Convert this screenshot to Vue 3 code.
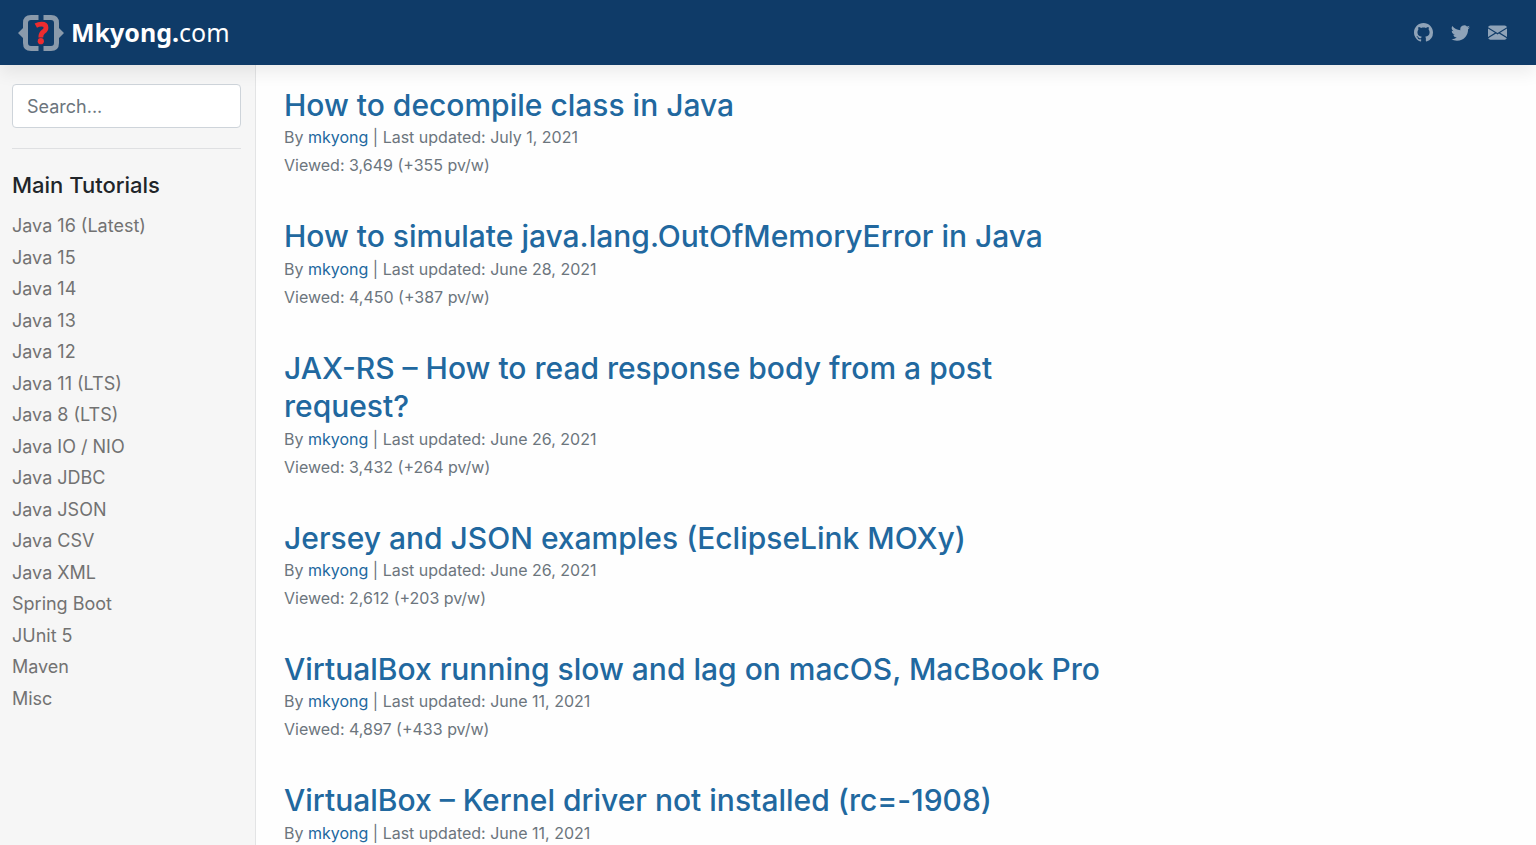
<script setup>
const tutorials = [
  'Java 16 (Latest)', 'Java 15', 'Java 14', 'Java 13', 'Java 12', 'Java 11 (LTS)',
  'Java 8 (LTS)', 'Java IO / NIO', 'Java JDBC', 'Java JSON', 'Java CSV', 'Java XML',
  'Spring Boot', 'JUnit 5', 'Maven', 'Misc',
]

const posts = [
  { title: 'How to decompile class in Java', date: 'July 1, 2021', views: '3,649 (+355 pv/w)' },
  { title: 'How to simulate java.lang.OutOfMemoryError in Java', date: 'June 28, 2021', views: '4,450 (+387 pv/w)' },
  { title: 'JAX-RS – How to read response body from a post request?', date: 'June 26, 2021', views: '3,432 (+264 pv/w)' },
  { title: 'Jersey and JSON examples (EclipseLink MOXy)', date: 'June 26, 2021', views: '2,612 (+203 pv/w)' },
  { title: 'VirtualBox running slow and lag on macOS, MacBook Pro', date: 'June 11, 2021', views: '4,897 (+433 pv/w)' },
  { title: 'VirtualBox – Kernel driver not installed (rc=-1908)', date: 'June 11, 2021' },
]
</script>

<template>
  <div class="page">
    <header class="topbar">
      <a class="brand" href="#" aria-label="Mkyong.com">
        <svg class="mark" viewBox="0 0 46 36" aria-hidden="true">
          <g fill="none" stroke="#8a9aab" stroke-width="5">
            <path d="M20.500 2.500H13Q7.500 2.500 7.500 8V28Q7.500 33.500 13 33.500H20.500" />
            <path d="M25.500 2.500H33Q38.500 2.500 38.500 8V28Q38.500 33.500 33 33.500H25.500" />
          </g>
          <path fill="#8a9aab" d="M6 12L0 18L6 24ZM40 12L46 18L40 24Z" />
          <path fill="none" stroke="#ee2c2f" stroke-width="4.800" d="M17.800 10.700Q20.500 9.200 23.500 9.200Q28 9.200 28 12.700Q28 15 25.300 16.800Q22.800 18.600 22.800 22.500" />
          <circle cx="22.800" cy="26.200" r="3.100" fill="#ee2c2f" />
        </svg>
        <span class="brand-name"><b>Mkyong.</b>com</span>
      </a>
      <nav class="social" aria-label="Social">
        <a href="#" aria-label="GitHub">
          <svg viewBox="0 0 16 16"><path d="M8 0C3.580 0 0 3.580 0 8c0 3.540 2.290 6.530 5.470 7.590.4.070.55-.17.55-.38 0-.19-.01-.82-.01-1.490-2.010.37-2.530-.49-2.690-.94-.09-.23-.48-.94-.82-1.130-.28-.15-.68-.52-.01-.53.63-.01 1.080.58 1.230.82.72 1.210 1.870.87 2.330.66.07-.52.28-.87.51-1.070-1.780-.2-3.640-.89-3.640-3.950 0-.87.31-1.590.82-2.150-.08-.2-.36-1.020.08-2.120 0 0 .67-.21 2.200.82.64-.18 1.320-.27 2-.27s1.360.09 2 .27c1.530-1.040 2.200-.82 2.200-.82.44 1.100.16 1.920.08 2.120.51.56.82 1.270.82 2.150 0 3.070-1.870 3.750-3.650 3.950.29.25.54.73.54 1.480 0 1.070-.01 1.930-.01 2.200 0 .21.15.46.55.38A8.010 8.010 0 0 0 16 8c0-4.420-3.580-8-8-8z" /></svg>
        </a>
        <a href="#" aria-label="Twitter">
          <svg viewBox="0 0 16 16"><path d="M5.026 15c6.038 0 9.341-5.003 9.341-9.334 0-.14 0-.282-.006-.422A6.685 6.685 0 0 0 16 3.542a6.658 6.658 0 0 1-1.889.518 3.301 3.301 0 0 0 1.447-1.817 6.533 6.533 0 0 1-2.087.793A3.286 3.286 0 0 0 7.875 6.030a9.325 9.325 0 0 1-6.767-3.429 3.289 3.289 0 0 0 1.018 4.382A3.323 3.323 0 0 1 .64 6.575v.045a3.288 3.288 0 0 0 2.632 3.218 3.203 3.203 0 0 1-.865.115 3.230 3.230 0 0 1-.614-.057 3.283 3.283 0 0 0 3.067 2.277A6.588 6.588 0 0 1 .78 13.580a6.320 6.320 0 0 1-.78-.045A9.344 9.344 0 0 0 5.026 15z" /></svg>
        </a>
        <a href="#" aria-label="Email">
          <svg viewBox="0 0 16 16"><path d="M.05 3.555A2 2 0 0 1 2 2h12a2 2 0 0 1 1.950 1.555L8 8.414.05 3.555zM0 4.697v7.104l5.803-3.558L0 4.697zM6.761 8.830l-6.570 4.027A2 2 0 0 0 2 14h12a2 2 0 0 0 1.808-1.144l-6.570-4.027L8 9.586l-1.239-.757zm3.436-.586L16 11.801V4.697l-5.803 3.546z" /></svg>
        </a>
      </nav>
    </header>

    <div class="columns">
      <aside class="sidebar">
        <form class="search" @submit.prevent>
          <input type="search" placeholder="Search..." aria-label="Search" />
        </form>
        <h2>Main Tutorials</h2>
        <ul>
          <li v-for="name in tutorials" :key="name"><a href="#">{{ name }}</a></li>
        </ul>
      </aside>

      <main class="posts">
        <article v-for="post in posts" :key="post.title">
          <h2><a href="#">{{ post.title }}</a></h2>
          <p>By <a href="#">mkyong</a> | Last updated: {{ post.date }}</p>
          <p v-if="post.views">Viewed: {{ post.views }}</p>
        </article>
      </main>
    </div>
  </div>
</template>

<style>
body {
  margin: 0;
  background: #fefefe;
}
</style>

<style scoped>
.page {
  display: flex;
  flex-direction: column;
  min-height: 100vh;
  font-family: Inter, "Liberation Sans", sans-serif;
  color: #6c757d;
}
a {
  color: #21689f;
  text-decoration: none;
}
.topbar {
  position: relative;
  display: flex;
  align-items: center;
  justify-content: space-between;
  height: 65px;
  padding: 0 29px 0 18px;
  box-sizing: border-box;
  background: #0f3b68;
  box-shadow: 0 8px 16px rgba(0, 0, 0, 0.07);
}
.brand {
  display: flex;
  align-items: center;
  gap: 7px;
  color: #fff;
}
.mark {
  width: 46px;
  height: 36px;
}
.brand-name {
  padding-bottom: 2px;
  font-family: "Noto Sans", "Open Sans", sans-serif;
  font-size: 25px;
  line-height: 36px;
}
.social {
  display: flex;
  gap: 18px;
}
.social a {
  display: flex;
}
.social svg {
  width: 19px;
  height: 19px;
  fill: #8fa3b8;
}
.columns {
  flex: 1;
  display: grid;
  grid-template-columns: 1fr 5fr;
}
.sidebar {
  padding: 19px 14px 24px 12px;
  border-right: 1px solid #e3e4e5;
  background: #f6f6f6;
}
.search {
  padding-bottom: 20px;
  border-bottom: 1px solid #dfe0e2;
}
.search input {
  display: block;
  width: 100%;
  height: 44px;
  box-sizing: border-box;
  padding: 0 14px;
  border: 1px solid #ced4da;
  border-radius: 4px;
  background: #fff;
  color: #6c757d;
  font: inherit;
  font-size: 18px;
  appearance: none;
}
.search input::placeholder {
  color: #6c757d;
  opacity: 1;
}
.sidebar h2 {
  margin: 22px 0 11px;
  color: #212529;
  font-size: 22px;
  font-weight: 500;
  line-height: 28px;
}
.sidebar ul {
  margin: 0;
  padding: 0;
  list-style: none;
  font-size: 18px;
  line-height: 1.75;
}
.sidebar li a {
  color: #727272;
}
.posts {
  width: 65%;
  padding: 21px 28px 0;
}
.posts article + article {
  margin-top: 38px;
}
.posts h2 {
  margin: 0 0 -1px;
  font-size: 30px;
  font-weight: 500;
  line-height: 1.28;
}
.posts p {
  margin: 0;
  font-size: 16px;
  line-height: 28px;
}
</style>
